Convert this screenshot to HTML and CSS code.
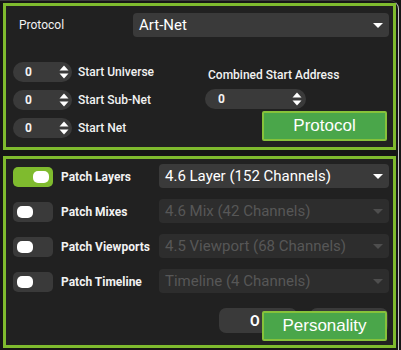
FILE: index.html
```html
<!DOCTYPE html>
<html lang="en">
<head>
  <meta charset="UTF-8">
  <title>Art-Net Patch</title>
  <link rel="stylesheet" href="styles.css">
</head>
<body>

<div class="window">
  <div class="panel panel-top">
    <div class="protocol-row">
      <span class="field-label">Protocol</span>
      <div class="select">
        <span>Art-Net</span>
        <i class="caret"></i>
      </div>
    </div>

    <div class="settings">
      <div class="spin-list">
        <div class="spin-row">
          <div class="spin"><span>0</span><svg class="arrows" viewBox="0 0 10 16"><polygon points="0.5,6.5 5,1.5 9.5,6.5"/><polygon points="0.5,9.5 5,14.5 9.5,9.5"/></svg></div>
          <span class="spin-label">Start Universe</span>
        </div>
        <div class="spin-row">
          <div class="spin"><span>0</span><svg class="arrows" viewBox="0 0 10 16"><polygon points="0.5,6.5 5,1.5 9.5,6.5"/><polygon points="0.5,9.5 5,14.5 9.5,9.5"/></svg></div>
          <span class="spin-label">Start Sub-Net</span>
        </div>
        <div class="spin-row">
          <div class="spin"><span>0</span><svg class="arrows" viewBox="0 0 10 16"><polygon points="0.5,6.5 5,1.5 9.5,6.5"/><polygon points="0.5,9.5 5,14.5 9.5,9.5"/></svg></div>
          <span class="spin-label">Start Net</span>
        </div>
      </div>

      <div class="combined">
        <span class="combined-label">Combined Start Address</span>
        <div class="spin spin-wide"><span>0</span><svg class="arrows" viewBox="0 0 10 16"><polygon points="0.5,6.5 5,1.5 9.5,6.5"/><polygon points="0.5,9.5 5,14.5 9.5,9.5"/></svg></div>
        <button class="green-btn">Protocol</button>
      </div>
    </div>
  </div>

  <div class="panel panel-bottom">
    <div class="patch-row">
      <div class="toggle on"><i></i></div>
      <span class="patch-label">Patch Layers</span>
      <div class="select"><span>4.6 Layer (152 Channels)</span><i class="caret"></i></div>
    </div>
    <div class="patch-row">
      <div class="toggle"><i></i></div>
      <span class="patch-label">Patch Mixes</span>
      <div class="select disabled"><span>4.6 Mix (42 Channels)</span><i class="caret"></i></div>
    </div>
    <div class="patch-row">
      <div class="toggle"><i></i></div>
      <span class="patch-label">Patch Viewports</span>
      <div class="select disabled"><span>4.5 Viewport (68 Channels)</span><i class="caret"></i></div>
    </div>
    <div class="patch-row">
      <div class="toggle"><i></i></div>
      <span class="patch-label">Patch Timeline</span>
      <div class="select disabled"><span>Timeline (4 Channels)</span><i class="caret"></i></div>
    </div>

    <div class="footer">
      <button class="gray-btn"><span class="ok">O</span></button>
      <button class="gray-btn"></button>
    </div>

    <button class="green-btn personality">Personality</button>
  </div>
</div>

</body>
</html>
```

FILE: styles.css
```css
:root {
  --green: #7fbb2e;
  --panel: #212121;
  --field: #3a3a3a;
  --field-off: #2d2d2d;
  --text: #f2f2f2;
}

body {
  margin: 0;
  background: #161616;
  font-family: Roboto, "Liberation Sans", sans-serif;
  color: var(--text);
}

.window {
  width: 399px;
  height: 350px;
  box-sizing: border-box;
  padding: 2px 2px 0 3px;
  border-top: 1px solid #3c3c3c;
  border-right: 1px solid #c4c4c4;
  border-top-right-radius: 9px;
}

.panel {
  border: 3px solid var(--green);
  background: var(--panel);
  box-sizing: border-box;
}

.panel-top {
  height: 147px;
  padding: 7px 4px 0 7px;
}

.protocol-row {
  display: flex;
  align-items: center;
}

.field-label {
  flex: 0 0 120px;
  padding-left: 6px;
  box-sizing: border-box;
  font-size: 12px;
}

.select {
  flex: 1;
  height: 24px;
  display: flex;
  align-items: center;
  justify-content: space-between;
  padding: 0 6px 0 6px;
  border-radius: 4px;
  background: var(--field);
  font-size: 15px;
  color: #fff;
}

.caret {
  width: 0;
  height: 0;
  border-left: 5px solid transparent;
  border-right: 5px solid transparent;
  border-top: 5px solid #fff;
}

.select.disabled {
  background: var(--field-off);
  color: #575757;
}

.select.disabled .caret {
  border-top-color: #4e4e4e;
}

.settings {
  display: flex;
  margin-top: 25px;
}

.spin-list {
  flex: 0 0 192px;
  display: flex;
  flex-direction: column;
  gap: 8px;
}

.spin-row {
  display: flex;
  align-items: center;
  gap: 6px;
}

.spin {
  width: 59px;
  height: 20px;
  box-sizing: border-box;
  display: flex;
  align-items: center;
  justify-content: space-between;
  padding: 0 3px 0 12px;
  border-radius: 10px;
  background: var(--field);
  font-size: 12px;
  font-weight: 700;
}

.spin-wide {
  width: 101px;
  padding-left: 13px;
  padding-right: 4px;
  margin-top: 7px;
}

.arrows {
  width: 10px;
  height: 16px;
  fill: #fff;
}

.spin-label {
  font-size: 12px;
  font-weight: 500;
}

.combined {
  flex: 1;
  display: flex;
  flex-direction: column;
  align-items: flex-start;
}

.combined-label {
  margin: 6px 0 0 3px;
  font-size: 12px;
  font-weight: 500;
  line-height: 14px;
}

.green-btn {
  width: 125px;
  height: 30px;
  border: 2px solid #86c23a;
  border-radius: 2px;
  background: #4aa64a;
  color: #fff;
  font-family: "Liberation Sans", Arial, sans-serif;
  font-size: 17px;
  padding: 0;
}

.combined .green-btn {
  align-self: flex-end;
  margin: 2px 2px 0 0;
}

.panel-bottom {
  position: relative;
  height: 192px;
  margin-top: 6px;
  padding: 5px 4px 0 7px;
}

.patch-row {
  display: flex;
  align-items: center;
  height: 24px;
  margin-bottom: 11px;
}

.toggle {
  flex: 0 0 40px;
  height: 20px;
  box-sizing: border-box;
  padding: 4px;
  border-radius: 5px;
  background: var(--field);
  display: flex;
  justify-content: flex-start;
  margin-top: 2px;
}

.toggle i {
  width: 16px;
  height: 12px;
  border-radius: 5px;
  background: #fff;
}

.toggle.on {
  background: var(--green);
  justify-content: flex-end;
}

.patch-label {
  flex: 0 0 98px;
  margin-left: 8px;
  font-size: 12px;
  font-weight: 700;
  margin-top: 2px;
}

.footer {
  display: flex;
  justify-content: flex-end;
  gap: 13px;
  margin-top: 15px;
  padding-right: 1px;
}

.gray-btn {
  width: 78px;
  height: 25px;
  border: none;
  border-radius: 7px;
  background: #3a3a3a;
  color: #fff;
  font-family: Roboto, sans-serif;
  font-size: 14px;
  font-weight: 700;
  padding: 0 0 0 31px;
  text-align: left;
}

.personality {
  position: absolute;
  top: 152px;
  right: 6px;
}
```
